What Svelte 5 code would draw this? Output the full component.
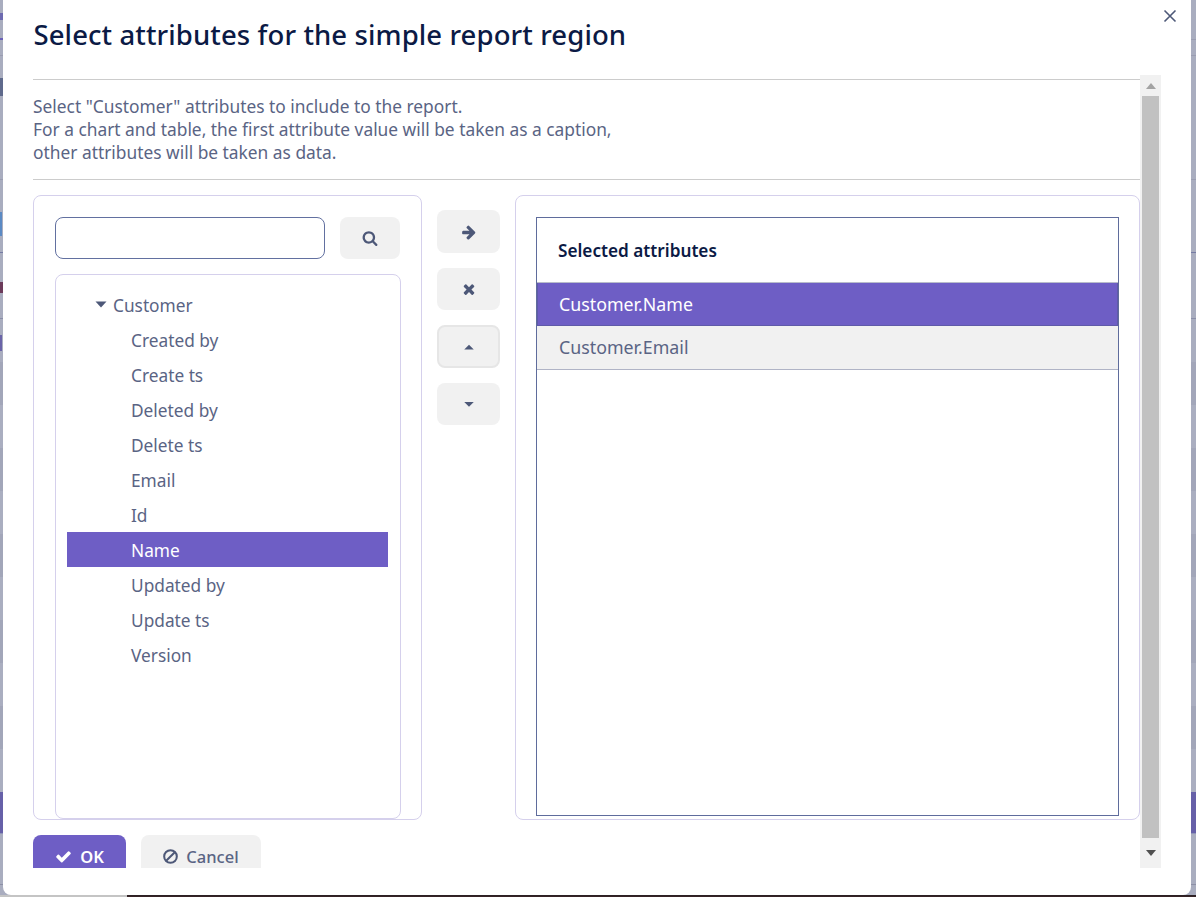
<script>
  const items = ['Created by','Create ts','Deleted by','Delete ts','Email','Id','Name','Updated by','Update ts','Version'];
  const P = {
    search:'M1216 832q0-185-131.5-316.5t-316.5-131.5-316.5 131.5-131.5 316.5 131.5 316.5 316.5 131.5 316.5-131.5 131.5-316.5zm512 832q0 52-38 90t-90 38q-54 0-90-38l-343-342q-179 124-399 124-143 0-273.5-55.5t-225-150-150-225-55.5-273.5 55.5-273.5 150-225 225-150 273.5-55.5 273.5 55.5 225 150 150 225 55.5 273.5q0 220-124 399l343 343q37 37 37 90z',
    arrow:'M1600 960q0 54-37 91l-651 651q-39 37-91 37-51 0-90-37l-75-75q-38-38-38-91t38-91l293-293h-704q-52 0-84.5-37.5t-32.5-90.5v-128q0-53 32.5-90.5t84.5-37.5h704l-293-294q-38-36-38-90t38-90l75-75q38-38 90-38 53 0 91 38l651 651q37 35 37 90z',
    times:'M1490 1322q0 40-28 68l-136 136q-28 28-68 28t-68-28l-294-294-294 294q-28 28-68 28t-68-28l-136-136q-28-28-28-68t28-68l294-294-294-294q-28-28-28-68t28-68l136-136q28-28 68-28t68 28l294 294 294-294q28-28 68-28t68 28l136 136q28 28 28 68t-28 68l-294 294 294 294q28 28 28 68z',
    check:'M1671 566q0 40-28 68l-724 724-136 136q-28 28-68 28t-68-28l-136-136-362-362q-28-28-28-68t28-68l136-136q28-28 68-28t68 28l294 295 656-657q28-28 68-28t68 28l136 136q28 28 28 68z',
    up:'M288 1216 L896 608 L1504 1216 Z',
    down:'M288 640 L1504 640 L896 1248 Z'
  };
</script>

<div class="screen">
  <div class="modal">
    <header class="head">
      <h1>Select attributes for the simple report region</h1>
      <button class="close" aria-label="Close">
        <svg viewBox="0 0 14 14" width="14" height="14"><path d="M1.5 1.5 12.5 12.5M12.5 1.5 1.5 12.5" /></svg>
      </button>
    </header>
    <div class="scroller">
      <div class="content">
        <div class="note">
          Select "Customer" attributes to include to the report.<br />
          For a chart and table, the first attribute value will be taken as a caption,<br />
          other attributes will be taken as data.
        </div>
        <div class="columns">
          <section class="panel left">
            <div class="search">
              <input type="text" />
              <button class="btn icon-search" aria-label="Search"><svg viewBox="0 0 1792 1792" width="16" height="16"><path d={P.search} /></svg></button>
            </div>
            <div class="tree">
              <div class="root"><svg class="caret" viewBox="0 0 12 7" width="12" height="7"><path d="M0.5 0.5H11.5L6 6.5Z" /></svg>Customer</div>
              {#each items as item}
                <div class="leaf-row" class:sel={item === 'Name'}>{item}</div>
              {/each}
            </div>
          </section>

          <div class="mid">
            <button class="btn mb first" aria-label="Add"><svg viewBox="0 0 1792 1792" width="16" height="16"><path d={P.arrow} /></svg></button>
            <button class="btn mb" aria-label="Remove"><svg viewBox="0 0 1792 1792" width="16" height="16"><path d={P.times} /></svg></button>
            <button class="btn mb focused" aria-label="Up"><svg viewBox="0 0 1792 1792" width="14" height="14"><path d={P.up} /></svg></button>
            <button class="btn mb" aria-label="Down"><svg viewBox="0 0 1792 1792" width="14" height="14"><path d={P.down} /></svg></button>
          </div>

          <section class="panel right">
            <div class="list">
              <div class="list-head">Selected attributes</div>
              <div class="row on">Customer.Name</div>
              <div class="row off">Customer.Email</div>
            </div>
          </section>
        </div>
        <div class="actions">
          <button class="btn act ok"><svg viewBox="0 0 1792 1792" width="17" height="17"><path d={P.check} /></svg>OK</button>
          <button class="btn act cancel"><svg class="ban" viewBox="0 0 14 14" width="15" height="15"><circle cx="7" cy="7" r="5.9" /><path d="M3 11 11 3" /></svg>Cancel</button>
        </div>
      </div>
      <div class="bar">
        <div class="arrow-btn"><svg viewBox="0 0 10 6" width="10" height="6"><path d="M5 0 10 6H0Z" /></svg></div>
        <div class="thumb"></div>
        <div class="arrow-btn dark"><svg viewBox="0 0 10 6" width="10" height="6"><path d="M0 0H10L5 6Z" /></svg></div>
      </div>
    </div>
  </div>
</div>

<style>
  :global(body) { margin: 0; background: #a9adbf; }
  .screen {
    height: 897px;
    width: 1196px;
    overflow: hidden;
    position: relative;
    font-family: "Noto Sans", "Open Sans", sans-serif;
    background:
      linear-gradient(#6d6ab0, #6d6ab0) 0 13px / 3px 7px no-repeat,
      linear-gradient(#6a60b8, #6a60b8) 0 38px / 3px 2px no-repeat,
      linear-gradient(#5f6a8c, #5f6a8c) 0 78px / 3px 18px no-repeat,
      linear-gradient(#5b8ac4, #5b8ac4) 0 212px / 2px 24px no-repeat,
      linear-gradient(#6b3a5a, #6b3a5a) 0 282px / 3px 11px no-repeat,
      linear-gradient(#6a64a8, #6a64a8) 0 335px / 2px 16px no-repeat,
      linear-gradient(#6660a8, #6660a8) 0 792px / 100% 41px no-repeat,
      linear-gradient(#8f94b8, #8f94b8) 0 833px / 100% 1px no-repeat,
      linear-gradient(#8d90a6, #8d90a6) 0 884px / 100% 1px no-repeat,
      linear-gradient(#272023, #3a2326) 127px 895px / 100% 2px no-repeat,
      linear-gradient(#c4c4c4, #c4c4c4) 0 895px / 127px 2px no-repeat,
      linear-gradient(#9a9db1, #9a9db1) 0 39px / 100% 1px no-repeat,
      linear-gradient(#9a9db1, #9a9db1) 0 55px / 100% 1px no-repeat,
      linear-gradient(#9a9db1, #9a9db1) 0 179px / 100% 1px no-repeat,
      linear-gradient(#757ba3, #757ba3) 0 252px / 100% 1px no-repeat,
      linear-gradient(#8a8ea8, #8a8ea8) 0 318px / 100% 1px no-repeat,
      repeating-linear-gradient(#a2a6b9 0 43px, #aaaec0 43px 86px) 0 362px / 100% 430px no-repeat,
      #a9adbf;
  }
  .modal {
    position: absolute;
    left: 3px;
    top: -8px;
    width: 1188px;
    height: 903px;
    background: #fff;
    border-radius: 8px;
    box-sizing: border-box;
    padding: 8px 0 0 30px;
    display: flex;
    flex-direction: column;
  }
  .head {
    height: 75px;
    flex: none;
    position: relative;
  }
  h1 {
    margin: 0;
    padding: 16px 0 0 0.5px;
    font-size: 27.5px;
    line-height: 38px;
    font-weight: 500;
    color: #0b1a45;
    letter-spacing: 0.1px;
  }
  .close {
    position: absolute;
    top: 9px;
    right: 14px;
    padding: 0;
    border: 0;
    background: none;
    display: flex;
  }
  .close path { stroke: #4d5878; stroke-width: 1.6; fill: none; }
  .scroller {
    display: flex;
    height: 793px;
    overflow: hidden;
  }
  .content {
    width: 1107px;
    flex: none;
  }
  .note {
    margin-top: 4px;
    border-top: 1px solid #cccccc;
    border-bottom: 1px solid #cccccc;
    padding: 15px 0 15px;
    font-size: 17.35px;
    line-height: 23px;
    color: #5a6484;
    height: 69px;
  }
  .columns {
    display: flex;
    margin-top: 15px;
    height: 625px;
  }
  .panel {
    border: 1px solid #d5d0ec;
    border-radius: 8px;
    box-sizing: border-box;
    height: 625px;
  }
  .left {
    width: 389px;
    padding: 21px 20px 0 21px;
  }
  .search {
    display: flex;
    gap: 15px;
    height: 42px;
  }
  input {
    width: 270px;
    height: 42px;
    box-sizing: border-box;
    border: 1px solid #6270a0;
    border-radius: 8px;
    background: #fff;
    outline: none;
  }
  .btn {
    border: 0;
    background: #f1f1f1;
    border-radius: 8px;
    padding: 0;
    display: flex;
    align-items: center;
    justify-content: center;
    font-family: inherit;
  }
  .btn svg { fill: #4d5878; }
  .icon-search { width: 60px; height: 42px; }
  .tree {
    margin-top: 15px;
    width: 346px;
    height: 545px;
    box-sizing: border-box;
    border: 1px solid #d5d0ec;
    border-radius: 8px;
    padding: 12px 12px 0 11px;
    font-size: 17.3px;
    color: #5a6484;
  }
  .root {
    height: 35px;
    line-height: 37px;
    position: relative;
    padding-left: 46px;
  }
  .caret {
    position: absolute;
    left: 28px;
    top: 14px;
    fill: #4d5878;
  }
  .leaf-row {
    height: 35px;
    line-height: 37px;
    padding-left: 64px;
  }
  .leaf-row.sel {
    background: #6e5ec5;
    color: #fff;
  }
  .mid {
    width: 93px;
    flex: none;
    display: flex;
    flex-direction: column;
    align-items: center;
    gap: 15px;
    padding-top: 15px;
    box-sizing: border-box;
  }
  .mb { width: 63px; height: 42px; flex: none; }
  .mb.first { height: 43px; }
  .mb.focused {
    height: 43px;
    border: 2px solid #e6e6e6;
    box-sizing: border-box;
  }
  .right {
    width: 625px;
    padding: 21px 20px 3px 20px;
  }
  .list {
    height: 599px;
    box-sizing: border-box;
    border: 1px solid #5f6c9c;
  }
  .list-head {
    height: 65px;
    box-sizing: border-box;
    padding: 20px 0 0 21px;
    line-height: 25px;
    font-size: 17.2px;
    font-weight: 600;
    color: #0b1a45;
    border-bottom: 1px solid #b8bccb;
  }
  .row {
    padding-left: 22px;
    font-size: 17.8px;
    box-sizing: border-box;
  }
  .row.on {
    background: #6e5ec5;
    color: #fff;
    height: 43px;
    line-height: 43px;
    border: 1px solid #5f5aa8;
    border-top: 0;
    padding-left: 21px;
  }
  .row.off {
    background: #f1f1f1;
    color: #5a6484;
    height: 44px;
    line-height: 42px;
    border-bottom: 1px solid #b0b4c6;
  }
  .actions {
    display: flex;
    gap: 15px;
    margin-top: 15px;
  }
  .act {
    height: 42px;
    font-size: 16.5px;
    font-weight: 600;
    gap: 8px;
    align-items: center;
  }
  .ok {
    width: 93px;
    background: #6e5ec5;
    color: #fff;
  }
  .ok svg { fill: #fff; }
  .cancel {
    width: 120px;
    color: #5a6484;
    font-weight: 500;
  }
  .ban { fill: none !important; }
  .ban circle, .ban path { stroke: #4d5878; stroke-width: 1.9; fill: none; }
  .bar {
    width: 21px;
    flex: none;
    background: #f1f1f1;
    display: flex;
    flex-direction: column;
    align-items: center;
    height: 793px;
  }
  .arrow-btn {
    height: 21px;
    flex: none;
    display: flex;
    align-items: center;
    justify-content: center;
    width: 100%;
  }
  .arrow-btn svg { fill: #a3a3a3; }
  .arrow-btn.dark { height: 30px; }
  .arrow-btn.dark svg { fill: #505050; }
  .thumb {
    width: 17px;
    flex: 1;
    background: #c1c1c1;
  }
</style>
